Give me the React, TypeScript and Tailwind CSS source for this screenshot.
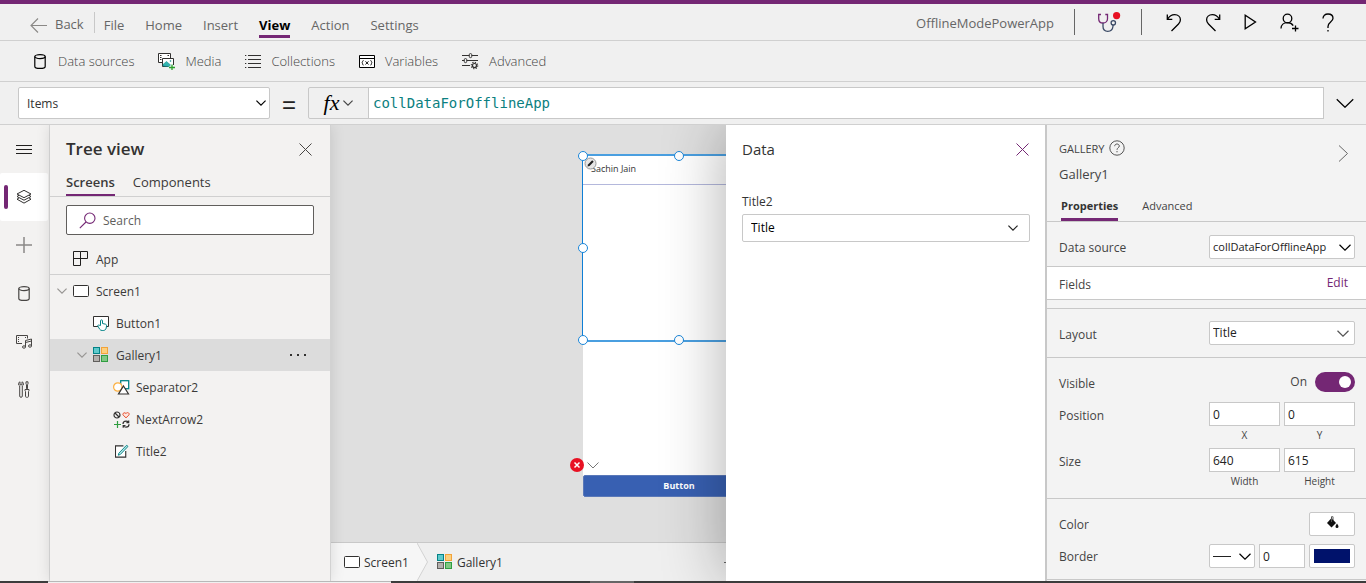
import React, { useState } from 'react';

type IconProps = { className?: string };

const Chevron: React.FC<IconProps> = ({ className }) => (
  <svg viewBox="0 0 12 7" fill="none" stroke="currentColor" strokeWidth="1.2" className={className} aria-hidden="true">
    <path d="M0.5 0.8 6 6.2 11.5 0.8" vectorEffect="non-scaling-stroke" />
  </svg>
);

const CloseIcon: React.FC<IconProps> = ({ className }) => (
  <svg width="13" height="13" viewBox="0 0 13 13" fill="none" stroke="currentColor" className={className} aria-hidden="true">
    <path d="M0.5 0.5l12 12M12.5 0.5l-12 12" />
  </svg>
);

const BackIcon = () => (
  <svg width="17" height="15" viewBox="0 0 17 15" fill="none" stroke="#8a8886" aria-hidden="true">
    <path d="M8 0.5 1 7.5l7 7M1 7.5h16" strokeWidth="1.1" />
  </svg>
);

const DatabaseIcon: React.FC<IconProps> = ({ className }) => (
  <svg width="12" height="15" viewBox="0 0 12 15" fill="none" stroke="currentColor" strokeWidth="1.2" className={className} aria-hidden="true">
    <ellipse cx="6" cy="2.6" rx="5.2" ry="2" />
    <path d="M0.8 2.6v9.8c0 1.1 2.3 2 5.2 2s5.2-.9 5.2-2V2.6" />
  </svg>
);

const MediaIcon = () => (
  <svg width="17" height="17" viewBox="0 0 17 17" fill="none" stroke="#323130" aria-hidden="true">
    <path d="M4.5 9.5h-4v-9h12v5" fill="#fff" />
    <path d="M2 2.5h1.5M2 4.5h1.5M2 6.5h1.5M9.5 2.5H11" strokeWidth="1.2" />
    <path d="M4.5 13.5v-8h11v6.5M4.5 13.5h6" fill="#fff" />
    <path d="M5 13v-1.500L8.500 8.500l4 3.500-2 1.500z" fill="#33b5b0" stroke="#0b8f8f" strokeWidth="0.6" />
    <circle cx="12.5" cy="8" r="0.8" fill="#0b8f8f" stroke="none" />
    <path d="M11 14.5h6M14 11.5v5.5" stroke="#2ca02c" strokeWidth="1.3" />
  </svg>
);

const CollectionsIcon = () => (
  <svg width="16" height="13" viewBox="0 0 16 13" fill="none" stroke="#323130" aria-hidden="true">
    <path d="M0 0.5h1.3M0 4.5h1.3M0 8.5h1.3M0 12.5h1.3M3 0.5h13M3 4.5h13M3 8.5h13M3 12.5h13" />
  </svg>
);

const VariablesIcon = () => (
  <svg width="16" height="13" viewBox="0 0 16 13" fill="none" stroke="#000" aria-hidden="true">
    <path d="M0.5 0.5h15v12h-15z" fill="#fff" />
    <path d="M0.5 3.5h15" />
    <path d="M4.5 5.5c-1.3 0-.6 1.800-1.500 2.300.9.500.2 2.300 1.500 2.300M11.500 5.500c1.300 0 .6 1.800 1.500 2.300-.9.500-.2 2.300-1.500 2.300M6.500 6.300l3 3.200M9.500 6.300l-3 3.200" strokeWidth="0.9" />
  </svg>
);

const AdvancedIcon = () => (
  <svg width="17" height="17" viewBox="0 0 17 17" fill="none" stroke="#323130" aria-hidden="true">
    <path d="M0 2.5h7M10 2.5h6M0 7.5h2M5 7.5h11M0 12.5h8" />
    <rect x="7.3" y="0.6" width="2.4" height="4" rx="1" />
    <rect x="2.3" y="5.6" width="2.4" height="4" rx="1" />
    <circle cx="12.5" cy="12.5" r="2" strokeWidth="1.2" />
    <circle cx="12.5" cy="12.5" r="3.2" strokeDasharray="1.2 1.3" strokeWidth="1.2" />
  </svg>
);

const StethoscopeIcon = () => (
  <svg width="24" height="21" viewBox="0 0 24 21" fill="none" strokeWidth="1.3" aria-hidden="true">
    <path d="M4 2.5H1.700v4.200c0 2.600 1.900 4.300 4.300 4.300s4.500-1.700 4.500-4.300V2.500H8.300" stroke="#742774" />
    <path d="M6 11v3.5c0 3 2 4.800 4.800 4.800 3 0 4.900-1.900 5.200-5V13" stroke="#3b4a66" />
    <circle cx="16.3" cy="10.8" r="2.2" stroke="#3b4a66" />
    <circle cx="19.6" cy="3.6" r="3.6" fill="#e81123" />
  </svg>
);

const UndoIcon: React.FC<IconProps> = ({ className }) => (
  <svg width="16" height="19" viewBox="0 0 16 19" fill="none" stroke="#000" strokeWidth="1.3" className={className} aria-hidden="true">
    <path d="M1.3 1.5v4.8h5" />
    <path d="M1.6 6.100C3.400 3.100 5.800 1.600 8.700 1.600c3.400 0 5.700 2.300 5.700 5.200 0 1.700-.7 3-1.900 4.200L5.500 18" />
  </svg>
);

const PlayIcon = () => (
  <svg width="13" height="16" viewBox="0 0 13 16" fill="none" stroke="#000" strokeWidth="1.3" aria-hidden="true">
    <path d="M1.2 1.3v13.4L11.5 8z" />
  </svg>
);

const ShareIcon = () => (
  <svg width="19" height="19" viewBox="0 0 19 19" fill="none" stroke="#000" strokeWidth="1.3" aria-hidden="true">
    <circle cx="7.5" cy="5.5" r="4.3" />
    <path d="M1 15.5c0-3.600 2.800-5.900 6.500-5.900 2.700 0 4.600 1.200 5.700 3" />
    <path d="M12 15.5h6.5M15.5 12.5v6" />
  </svg>
);

const HelpIcon = () => (
  <svg width="12" height="19" viewBox="0 0 12 19" fill="none" stroke="#000" strokeWidth="1.3" aria-hidden="true">
    <path d="M1 5.5C1 2.700 3 1 6 1s5 1.700 5 4.200c0 3.800-5 4-5 8.300v1.500" />
    <path d="M6 17v1.6" />
  </svg>
);

const LayersIcon = () => (
  <svg width="16" height="16" viewBox="0 0 16 16" fill="none" stroke="#323130" strokeWidth="1" aria-hidden="true">
    <path d="M8 1.3 15 5 8 8.700 1 5z" />
    <path d="M3 6.2 1 7.500l7 3.700 7-3.700-2-1.300" />
    <path d="M3 8.9 1 10.200l7 3.900 7-3.900-2-1.300" />
  </svg>
);

const MediaRailIcon = () => (
  <svg width="17" height="15" viewBox="0 0 17 15" fill="none" stroke="#484644" aria-hidden="true">
    <path d="M6 9.5H0.5v-8h11v3" />
    <path d="M2.5 3v1M2.5 5v1M2.5 7v1M9.5 3v1" />
    <path d="M9.5 13V6.500l6-1.500v7M9.500 8.500l6-1.500" />
    <ellipse cx="8" cy="13" rx="1.5" ry="1.2" />
    <ellipse cx="14" cy="12" rx="1.5" ry="1.2" />
  </svg>
);

const ToolsIcon = () => (
  <svg width="12" height="17" viewBox="0 0 12 17" fill="none" stroke="#484644" strokeWidth="1" aria-hidden="true">
    <path d="M2 0.8v3h2v-3c1 .4 1.500 1.300 1.500 2.200 0 .9-.5 1.600-1.200 2v10c0 .9-.5 1.300-1.300 1.300s-1.300-.4-1.300-1.300V5C1 4.600.5 3.900.5 3 .5 2.100 1 1.200 2 .8z" />
    <path d="M8 0.8h2v2l-.5 1v4h-1v-4l-.5-1zM7 8.500h4v1l-.5 1v5c0 .5-.5.8-1.500.8s-1.500-.3-1.500-.8v-5l-.5-1z" />
  </svg>
);

const SearchIcon = () => (
  <svg width="17" height="17" viewBox="0 0 17 17" fill="none" stroke="#742774" strokeWidth="1.1" aria-hidden="true">
    <circle cx="10.8" cy="6.2" r="5.2" />
    <path d="M7 10 0.8 16.2" />
  </svg>
);

const AppIcon = () => (
  <svg width="15" height="15" viewBox="0 0 15 15" fill="none" stroke="#201f1e" aria-hidden="true">
    <path d="M0.5 0.5h7v14h-7zM0.5 7.5h14v-7h-7" />
  </svg>
);

const ScreenIcon = () => (
  <svg width="16" height="13" viewBox="0 0 16 13" aria-hidden="true">
    <rect x="0.5" y="0.5" width="15" height="11" rx="1" fill="#fff" stroke="#323130" />
  </svg>
);

const ButtonIcon = () => (
  <svg width="16" height="15" viewBox="0 0 16 15" aria-hidden="true">
    <path d="M5 10.5H0.5v-10h15v10H13" fill="#fff" stroke="#323130" />
    <path d="M7.5 9.5V4.800c0-1.300 2-1.300 2 0v2.700l3 .7c.8.200 1.200.8 1.100 1.500l-.4 2.300c-.3 1.500-1.400 2.500-3 2.500h-1c-1.200 0-1.900-.4-2.500-1.300L4.800 10c-.2-.9.8-1.300 1.400-.8z" fill="#fff" stroke="#038387" />
  </svg>
);

const GalleryIcon = () => (
  <svg width="16" height="16" viewBox="0 0 16 16" aria-hidden="true">
    <rect x="0.5" y="0.5" width="6" height="6" fill="#5fc9cb" stroke="#038387" />
    <rect x="8.5" y="0.5" width="6" height="6" fill="#fcd07e" stroke="#f2a33a" />
    <rect x="0.5" y="8.5" width="6" height="6" fill="#b3b0ad" stroke="#605e5c" />
    <rect x="8.5" y="8.5" width="6" height="6" fill="#81c784" stroke="#2f9e41" />
  </svg>
);

const ShapesIcon = () => (
  <svg width="17" height="15" viewBox="0 0 17 15" className="shrink-0" aria-hidden="true">
    <rect x="7.7" y="0.7" width="8" height="8" fill="#fff" stroke="#038387" strokeWidth="1.3" />
    <circle cx="4.8" cy="7" r="4.2" fill="#fff" stroke="#fcb040" strokeWidth="1.2" />
    <path d="M10.5 6 15.500 14h-10z" fill="#fff" stroke="#323130" strokeWidth="1.2" />
  </svg>
);

const IconsIcon = () => (
  <svg width="17" height="17" viewBox="0 0 17 17" fill="none" className="shrink-0" aria-hidden="true">
    <g stroke="#323130" strokeWidth="1.2">
      <circle cx="4" cy="4" r="3" />
      <path d="M2 2l4 4" />
      <path d="M10 13c0-1.700 1.200-2.900 3-2.900 1.100 0 1.900.4 2.500 1.200M15.700 9.500v2.200h-2.300M16 13.300c0 1.700-1.200 2.900-3 2.900-1.100 0-1.900-.4-2.500-1.200M10.200 16.700v-2.200h2.300" />
    </g>
    <path d="M13 6.8 10.200 4.200C9 2.800 11.200.6 13 2.500c1.800-1.900 4-.3 2.800 1.700z" fill="#fde7e0" stroke="#e8502e" />
    <path d="M1 13.5h7M4.5 10v7" stroke="#2f9e41" strokeWidth="1.2" />
  </svg>
);

const LabelIcon = () => (
  <svg width="15" height="15" viewBox="0 0 15 15" className="ml-0.5" aria-hidden="true">
    <path d="M11.5 7v6.5h-11v-12H9" fill="#fff" stroke="#323130" strokeWidth="1.2" />
    <path d="M3.5 11.5l.6-2.200L12 1.200c.8-.8 2.200.5 1.400 1.400L5.700 10.700z" fill="#b5e4e5" stroke="#038387" />
  </svg>
);

const FillIcon = () => (
  <svg width="13" height="13" viewBox="0 0 13 13" aria-hidden="true">
    <path d="M1 7 5.500 2l4.500 5-4.500 4.500z" fill="#111" />
    <path d="M5.5 6V1c0-1 1.500-1 1.500 0v3" fill="none" stroke="#555" />
    <path d="M11 7.5c.9 1.500 1.500 2.200 1.500 3.100a1.500 1.500 0 0 1-3 0c0-.9.6-1.600 1.500-3.100z" fill="#111" />
  </svg>
);

interface SelectBoxProps {
  id: string;
  label: string;
  value: string;
  className: string;
  chevron: string;
}

const SelectBox: React.FC<SelectBoxProps> = ({ id, label, value, className, chevron }) => (
  <div className="relative flex items-center">
    <select
      id={id}
      aria-label={label}
      defaultValue={value}
      className={`w-full appearance-none rounded-xs border border-[#c8c8c8] bg-white outline-none ${className}`}
    >
      <option>{value}</option>
    </select>
    <Chevron className={`pointer-events-none absolute ${chevron}`} />
  </div>
);

const menuItems = ['File', 'Home', 'Insert', 'View', 'Action', 'Settings'];

const toolbarItems = [
  { label: 'Data sources', icon: <DatabaseIcon className="mx-0.5" /> },
  { label: 'Media', icon: <MediaIcon /> },
  { label: 'Collections', icon: <CollectionsIcon /> },
  { label: 'Variables', icon: <VariablesIcon /> },
  { label: 'Advanced', icon: <AdvancedIcon /> },
];

const treeItems = [
  { label: 'Screen1', icon: <ScreenIcon />, indent: 'pl-[7px]', expandable: true },
  { label: 'Button1', icon: <ButtonIcon />, indent: 'pl-[43px]', expandable: false },
  { label: 'Gallery1', icon: <GalleryIcon />, indent: 'pl-[27px]', expandable: true },
  { label: 'Separator2', icon: <ShapesIcon />, indent: 'pl-[63px]', expandable: false },
  { label: 'NextArrow2', icon: <IconsIcon />, indent: 'pl-[63px]', expandable: false },
  { label: 'Title2', icon: <LabelIcon />, indent: 'pl-[63px]', expandable: false },
];

const railItems = [
  { label: 'Insert', icon: <svg width="16" height="16" viewBox="0 0 16 16" stroke="#8a8886" strokeWidth="1.5" aria-hidden="true"><path d="M0 8h16M8 0v16" /></svg> },
  { label: 'Data', icon: <DatabaseIcon className="text-[#484644]" /> },
  { label: 'Media', icon: <MediaRailIcon /> },
  { label: 'Tools', icon: <ToolsIcon /> },
];

const handles = [
  'left-0 top-0',
  'left-1/2 top-0',
  'left-0 top-1/2',
  'left-0 top-full',
  'left-1/2 top-full',
];

const Header = () => (
  <header className="flex h-[37px] shrink-0 items-stretch justify-between border-b border-[#d0d0d0]">
    <nav className="flex items-stretch text-[13px] text-[#666666]">
      <button className="ml-[30px] flex items-center gap-2 pt-1.5">
        <BackIcon />
        Back
      </button>
      <span className="ml-2.5 mt-2 h-[21px] w-px bg-[#c8c8c8]" />
      <div className="ml-[9px] flex gap-[21px]">
        {menuItems.map(item => (
          <button
            key={item}
            className={
              item === 'View'
                ? 'mb-0.5 border-b-3 border-[#742774] pt-2.5 leading-5 font-bold text-black'
                : 'mb-0.5 border-b-3 border-transparent pt-2.5 leading-5'
            }
          >
            {item}
          </button>
        ))}
      </div>
    </nav>
    <div className="flex items-center pr-8">
      <span className="pt-1 text-[13px] text-[#666666]">OfflineModePowerApp</span>
      <span className="ml-5 h-[26px] w-px bg-[#666666]" />
      <button aria-label="App checker" className="ml-[22px] mr-5"><StethoscopeIcon /></button>
      <span className="mr-6 h-[26px] w-px bg-[#666666]" />
      <div className="flex items-center gap-[23px]">
        <button aria-label="Undo"><UndoIcon /></button>
        <button aria-label="Redo"><UndoIcon className="-scale-x-100" /></button>
        <button aria-label="Preview"><PlayIcon /></button>
        <button aria-label="Share"><ShareIcon /></button>
        <button aria-label="Help"><HelpIcon /></button>
      </div>
    </div>
  </header>
);

const FormulaBar = () => (
  <div className="flex h-[43px] shrink-0 items-center border-b border-[#d0d0d0] pl-[18px]">
    <div className="w-[252px]">
      <SelectBox id="property" label="Property" value="Items" className="h-8 px-2 pt-0.5 text-xs text-[#333333]" chevron="right-1 w-2.5" />
    </div>
    <span className="mx-3 pt-1 font-['Liberation_Sans'] text-2xl text-[#222222]">=</span>
    <button aria-label="Function help" className="flex h-8 w-[61px] items-center justify-center gap-1 rounded-l-xs border border-[#c8c8c8]">
      <span className="font-['Liberation_Serif'] text-[22px] italic leading-5 text-black">fx</span>
      <Chevron className="w-2.5 text-[#444444]" />
    </button>
    <input
      aria-label="Formula"
      defaultValue="collDataForOfflineApp"
      className="-ml-px h-8 min-w-0 flex-1 border border-[#c8c8c8] bg-white px-1 font-['DejaVu_Sans_Mono',monospace] text-sm text-[#0b8080] outline-none"
    />
    <button aria-label="Expand formula bar" className="px-3"><Chevron className="w-[18px] text-black" /></button>
  </div>
);

const Rail = () => (
  <aside className="flex w-[50px] shrink-0 flex-col border-r border-[#dadada] bg-[#f3f2f1]">
    <button aria-label="Menu" className="flex h-12 w-12 items-center justify-center">
      <svg width="16" height="11" viewBox="0 0 16 11" stroke="#201f1e" aria-hidden="true"><path d="M0 1.5h16M0 5.5h16M0 9.5h16" /></svg>
    </button>
    <button aria-label="Tree view" className="flex h-12 w-12 items-center rounded-xs bg-white pl-1">
      <span className="mr-2 h-6 w-1 rounded-xs bg-[#742774]" />
      <LayersIcon />
    </button>
    {railItems.map(item => (
      <button key={item.label} aria-label={item.label} className="flex h-12 w-12 items-center justify-center">{item.icon}</button>
    ))}
  </aside>
);

const TreeView = () => (
  <section className="z-10 flex w-[281px] shrink-0 flex-col border-r border-[#d2d2d2] bg-[#f3f2f1] text-xs text-[#3b3a39] shadow-[0_0_14px_rgba(0,0,0,0.12)]">
    <div className="flex h-12 items-center justify-between px-4">
      <h2 className="text-[17px] font-semibold text-[#323130]">Tree view</h2>
      <button aria-label="Close tree view" className="mr-0.5 text-[#484644]"><CloseIcon /></button>
    </div>
    <div className="flex h-6 gap-[18px] border-b border-[#d0d0d0] px-4 text-[13px]">
      <button className="border-b-2 border-[#742774] pb-[3px] font-semibold leading-4">Screens</button>
      <button className="border-b-2 border-transparent pb-[3px] leading-4">Components</button>
    </div>
    <div className="mx-4 mt-2 flex h-[30px] items-center gap-[7px] rounded-xs border border-[#605e5c] bg-white px-3">
      <SearchIcon />
      <input aria-label="Search" placeholder="Search" className="min-w-0 flex-1 pt-0.5 text-xs outline-none placeholder:text-[#605e5c]" />
    </div>
    <button className="flex h-10 items-center gap-2 border-b border-[#d0d0d0] pl-[23px] pt-2">
      <AppIcon />
      <span className="pt-0.5">App</span>
    </button>
    <ul>
      {treeItems.map(item => {
        const selected = item.label === 'Gallery1';
        return (
          <li key={item.label} className={`flex h-8 items-center ${item.indent} ${selected ? 'bg-[#dcdcdc]' : ''}`}>
            {item.expandable && (
              <button aria-label={`Collapse ${item.label}`} className="mr-1.5 text-[#979593]"><Chevron className="w-2.5" /></button>
            )}
            <button className="flex items-center gap-[7px]">
              <span className="flex w-4">{item.icon}</span>
              <span className="pt-0.5">{item.label}</span>
            </button>
            {selected && (
              <button aria-label="More actions" className="ml-auto mr-6">
                <svg width="16" height="4" viewBox="0 0 16 4" fill="#323130" aria-hidden="true"><path d="M0 1h2v2H0zM7 1h2v2H7zM14 1h2v2h-2z" /></svg>
              </button>
            )}
          </li>
        );
      })}
    </ul>
  </section>
);

const Canvas = () => (
  <main className="flex min-w-0 flex-1 flex-col">
    <div className="relative flex-1 overflow-hidden bg-[#dfdfdf]">
      {/* Phone screen being edited */}
      <div className="absolute left-[252px] top-[30px] h-[342px] w-48 bg-white">
        <button className="absolute inset-x-0 bottom-0 h-[22px] rounded-xs border border-[#5a78b8] bg-[#3860b2] text-[9px] font-bold text-white">
          Button
        </button>
        <svg width="12" height="7" viewBox="0 0 12 7" fill="none" stroke="#777" className="absolute left-1 top-[307px]" aria-hidden="true"><path d="M0.5 0.5 6 6l5.5-5.5" /></svg>
        <svg width="14" height="14" viewBox="0 0 14 14" className="absolute -left-[13px] top-[303px]" aria-hidden="true">
          <circle cx="7" cy="7" r="7" fill="#e81123" />
          <path d="M4.5 4.5l5 5M9.5 4.5l-5 5" stroke="#fff" strokeWidth="1.5" />
        </svg>
        {/* Selected gallery with its resize handles */}
        <div className="absolute -left-px -top-px h-[188px] w-[193px] border-y-2 border-l border-y-[#4a9fe0] border-l-[#0f7fd6]">
          <p className="h-[29px] border-b border-[#b4b8dc] pl-2 text-[9px] leading-[26px] text-[#333333]">Sachin Jain</p>
          {handles.map(place => (
            <span key={place} className={`absolute size-2.5 -translate-1/2 rounded-full border border-[#1a86d9] bg-white ${place}`} />
          ))}
          <svg width="13" height="13" viewBox="0 0 13 13" className="absolute left-px top-px" aria-hidden="true">
            <circle cx="6.5" cy="6.5" r="5.5" fill="#e6e6e6" stroke="#999" />
            <path d="M3.5 9.5 4 7.500 8.200 3.300l1.500 1.500L5.500 9z" fill="#222" />
          </svg>
        </div>
      </div>
    </div>
    <nav className="flex h-[39px] shrink-0 items-stretch border-t border-[#c8c8c8] bg-[#efefef] text-xs text-[#333333]">
      <button className="flex items-center gap-1 bg-[#f6f6f6] pl-[13px] pr-2">
        <ScreenIcon />
        <span className="pt-0.5">Screen1</span>
      </button>
      <svg width="12" height="38" viewBox="0 0 12 38" aria-hidden="true">
        <path d="M0 0 10.5 19 0 38z" fill="#f6f6f6" />
        <path d="M0 0 10.5 19 0 38" fill="none" stroke="#d2d2d2" />
      </svg>
      <button className="ml-2 flex items-center gap-1">
        <GalleryIcon />
        <span className="pt-0.5">Gallery1</span>
      </button>
      <span className="ml-auto self-center"><svg width="2" height="1" aria-hidden="true"><path d="M0 0h2v1H0z" fill="#666" /></svg></span>
    </nav>
  </main>
);

const DataPanel = () => (
  <section className="z-10 w-[319px] shrink-0 bg-white pl-4 pr-[15px] text-[#333333] shadow-[0_0_60px_rgba(0,0,0,0.32)]">
    <div className="flex h-12 items-center justify-between">
      <h2 className="text-[15px]">Data</h2>
      <button aria-label="Close data panel" className="mr-px text-[#742774]"><CloseIcon /></button>
    </div>
    <label htmlFor="title2" className="mb-1 mt-5 block text-xs leading-[17px]">Title2</label>
    <SelectBox id="title2" label="Title2" value="Title" className="h-7 px-2 text-xs text-black" chevron="right-3 w-2.5 text-[#222222]" />
  </section>
);

const fieldClass = 'h-6 w-full min-w-0 border border-[#c8c8c8] bg-white px-[3px] text-xs text-[#222222] outline-none';

interface PairRowProps {
  label: string;
  fields: { name: string; value: string }[];
}

const PairRow: React.FC<PairRowProps> = ({ label, fields }) => (
  <div className="flex h-[46px] justify-between">
    <span className="pt-1.5">{label}</span>
    <div className="flex w-[146px] gap-1">
      {fields.map(field => (
        <label key={field.name} className="flex flex-1 flex-col text-center text-[10px] leading-[19px]">
          <input defaultValue={field.value} className={fieldClass} />
          {field.name}
        </label>
      ))}
    </div>
  </div>
);

const PropertiesPanel = () => {
  const [visible, setVisible] = useState(true);

  return (
    <aside className="z-20 flex w-[321px] shrink-0 flex-col border-l-2 border-[#c8c8c8] bg-[#f3f3f3] text-xs text-[#444444]">
      <div className="flex items-start justify-between pl-3 pr-[17px] pt-3.5">
        <div>
          <div className="flex h-[18px] items-center gap-1 text-[11px]">
            <span className="pt-0.5">GALLERY</span>
            <button aria-label="Help">
              <svg width="16" height="16" viewBox="0 0 16 16" fill="none" stroke="#555" aria-hidden="true">
                <circle cx="8" cy="8" r="7.2" />
                <path d="M5.7 6.200c0-1.400 1-2.200 2.300-2.200s2.300.8 2.300 2c0 1.700-2.300 1.800-2.300 3.800M8 11v1.300" />
              </svg>
            </button>
          </div>
          <h2 className="mt-[7px] text-[13px] leading-5">Gallery1</h2>
        </div>
        <button aria-label="Collapse panel" className="pt-1.5">
          <svg width="11" height="17" viewBox="0 0 11 17" fill="none" stroke="#666" aria-hidden="true"><path d="M1 0.5l8.500 8L1 16.500" /></svg>
        </button>
      </div>
      <div className="mt-[13px] flex h-[25px] gap-6 border-b border-[#c8c8c8] px-3.5 text-[11px] leading-4">
        <button className="border-b-3 border-[#742774] pb-1 font-bold text-[#333333]">Properties</button>
        <button className="border-b-3 border-transparent pb-1">Advanced</button>
      </div>
      <div className="flex h-[45px] items-center justify-between border-b border-[#c8c8c8] pl-3 pr-[11px] pt-1.5">
        <label htmlFor="source" className="pt-0.5">Data source</label>
        <div className="w-[146px]">
          <SelectBox id="source" label="Data source" value="collDataForOfflineApp" className="h-6 px-[3px] text-[11px] text-[#222222]" chevron="right-1 w-3 text-black" />
        </div>
      </div>
      <div className="flex h-[33px] items-center justify-between border-b border-[#c8c8c8] bg-white pl-3 pr-[18px]">
        <span className="pt-1">Fields</span>
        <a href="#fields" className="text-[#742774]">Edit</a>
      </div>
      <div className="mt-2 flex h-[50px] items-center justify-between border-y border-[#c8c8c8] pl-3 pr-[11px]">
        <label htmlFor="layout" className="pt-1">Layout</label>
        <div className="w-[146px]">
          <SelectBox id="layout" label="Layout" value="Title" className="h-6 px-[3px] text-xs text-[#222222]" chevron="right-1.5 w-3 text-[#555555]" />
        </div>
      </div>
      <div className="border-b border-[#c8c8c8] pb-1 pl-3 pr-[11px]">
        <div className="flex h-11 items-center pt-1">
          <label htmlFor="visible" className="mr-auto pt-1">Visible</label>
          <span className="mr-2">{visible ? 'On' : 'Off'}</span>
          <input
            id="visible"
            type="checkbox"
            role="switch"
            checked={visible}
            onChange={e => setVisible(e.target.checked)}
            className="flex h-5 w-10 appearance-none items-center rounded-full bg-[#8a8886] px-1 before:size-3 before:rounded-full before:bg-white before:content-[''] checked:justify-end checked:bg-[#742774]"
          />
        </div>
        <PairRow label="Position" fields={[{ name: 'X', value: '0' }, { name: 'Y', value: '0' }]} />
        <PairRow label="Size" fields={[{ name: 'Width', value: '640' }, { name: 'Height', value: '615' }]} />
      </div>
      <div className="flex h-[81px] flex-col gap-2 border-b border-[#c8c8c8] pl-3 pr-[11px] pt-[13px]">
        <div className="flex h-6 items-center justify-between">
          <span className="pt-0.5">Color</span>
          <button aria-label="Fill color" className="flex h-6 w-[46px] items-center justify-center rounded-xs border border-[#c8c8c8] bg-white pb-1">
            <FillIcon />
          </button>
        </div>
        <div className="flex h-6 items-center gap-1">
          <span className="mr-auto pt-0.5">Border</span>
          <button aria-label="Border style" className="flex h-6 w-[46px] items-center justify-between rounded-xs border border-[#c8c8c8] bg-white px-[3px]">
            <span className="h-px w-[18px] bg-[#222222]" />
            <Chevron className="w-3 text-black" />
          </button>
          <div className="w-[46px]">
            <input aria-label="Border width" defaultValue="0" className={fieldClass} />
          </div>
          <button aria-label="Border color" className="flex h-6 w-[46px] items-center justify-center rounded-xs border border-[#c8c8c8] bg-white">
            <span className="h-3.5 w-9 bg-[#00126b]" />
          </button>
        </div>
      </div>
    </aside>
  );
};

const App: React.FC = () => (
  <div className="flex h-screen flex-col overflow-hidden border-t-4 border-[#742774] bg-[#f0f0f0] font-['Open_Sans','Noto_Sans',sans-serif]">
    <Header />
    <div className="flex h-[41px] shrink-0 items-center gap-6 border-b border-[#d0d0d0] pl-8 text-[13px]">
      {toolbarItems.map(item => (
        <button key={item.label} className="flex items-center gap-2.5 text-black">
          {item.icon}
          <span className="pt-0.5 font-light text-[#444444]">{item.label}</span>
        </button>
      ))}
    </div>
    <FormulaBar />
    <div className="flex min-h-0 flex-1 overflow-hidden">
      <Rail />
      <TreeView />
      <Canvas />
      <DataPanel />
      <PropertiesPanel />
    </div>
    <div className="flex h-0.5 shrink-0 bg-[#3c3c3c]">
      <span className="ml-12 w-[343px] border-t border-[#b8b8b8] bg-[#f0f0f0]" />
      <span className="ml-[199px] w-11 bg-[#666666]" />
    </div>
  </div>
);

export default App;
